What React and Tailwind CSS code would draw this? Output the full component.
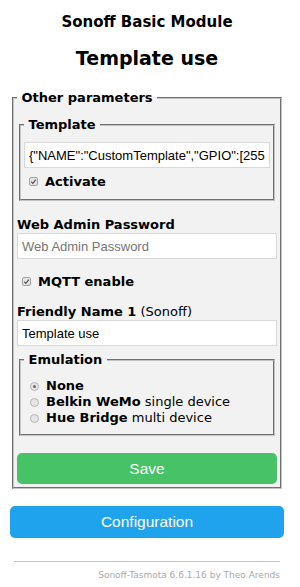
import React from 'react';

const verdana = { fontFamily: '"DejaVu Sans", Verdana, sans-serif' };

const Check = () => (
  <span className="inline-flex h-[9px] w-[9px] shrink-0 items-center justify-center rounded-[2px] border border-[#a3a3a3] bg-[#e4e4e4]">
    <svg viewBox="0 0 10 10" className="h-[7px] w-[7px]">
      <path d="M1.8 5.3 L4.1 7.6 L8.3 2.4" fill="none" stroke="#505050" strokeWidth="1.7" />
    </svg>
  </span>
);

const Radio = ({ on }) => (
  <span className="inline-flex h-[9px] w-[9px] shrink-0 items-center justify-center rounded-full border border-[#b5b5b5] bg-[#e6e6e6]">
    {on && <span className="h-[3px] w-[3px] rounded-full bg-[#6a6a6a]" />}
  </span>
);

const Legend = ({ children }) => (
  <legend className="p-0 text-[13px] leading-[15px] font-bold">&nbsp;{children}&nbsp;</legend>
);

const TextInput = ({ value, placeholder, className = '' }) => (
  <input
    type="text"
    defaultValue={value}
    placeholder={placeholder}
    className={`block h-[26px] w-full border border-[#d9d9d9] bg-white px-[4px] font-['Liberation_Sans',Arial,sans-serif] text-[13px] text-black outline-none placeholder:text-[#757575] ${className}`}
  />
);

const template =
  '{"NAME":"CustomTemplate","GPIO":[255,255,255,255,255,255,0,0,255,255,255,255,255],"FLAG":1,"BASE":18}';

export default function App() {
  return (
    <div className="min-h-[587px] w-[300px] bg-white text-black" style={verdana}>
      <div className="ml-[10px] w-[274px]">
        <h3 className="mt-[13px] text-center text-[15px] leading-[18px] font-bold">Sonoff Basic Module</h3>
        <h2 className="mt-[16px] text-center text-[19px] leading-[22px] font-bold">Template use</h2>

        <fieldset className="mx-[2px] mt-[21px] border-2 border-[#c4c4c4] bg-[#f2f2f2] px-[3px] pt-[3px] pb-[3px] [border-style:groove]">
          <Legend>Other parameters</Legend>

          <fieldset className="mx-[2px] mt-[9px] border-2 border-[#c4c4c4] px-[3px] pt-[3px] pb-[10px] [border-style:groove]">
            <Legend>Template</Legend>
            <TextInput value={template} className="mt-[7px]" />
            <div className="mt-[6px] flex items-center pl-[5px] text-[13px] leading-[15px]">
              <Check />
              <b className="ml-[7px]">Activate</b>
            </div>
          </fieldset>

          <div className="mt-[16px] text-[13px] leading-[15px] font-bold">Web Admin Password</div>
          <TextInput placeholder="Web Admin Password" className="mt-[1px]" />

          <div className="mt-[15px] flex items-center pl-[5px] text-[13px] leading-[15px]">
            <Check />
            <b className="ml-[7px]">MQTT enable</b>
          </div>

          <div className="mt-[15px] text-[13px] leading-[15px]">
            <b>Friendly Name 1</b> (Sonoff)
          </div>
          <TextInput value="Template use" className="mt-[1px]" />

          <fieldset className="mx-[2px] mt-[6px] border-2 border-[#c4c4c4] px-[3px] pt-[3px] pb-[8px] [border-style:groove]">
            <Legend>Emulation</Legend>
            <div className="mt-[8px] text-[13px] leading-[16px]">
              <div className="flex items-center pl-[6px]">
                <Radio on />
                <span className="ml-[7px]"><b>None</b></span>
              </div>
              <div className="flex items-center pl-[6px]">
                <Radio />
                <span className="ml-[7px]"><b>Belkin WeMo</b> single device</span>
              </div>
              <div className="flex items-center pl-[6px]">
                <Radio />
                <span className="ml-[7px]"><b>Hue Bridge</b> multi device</span>
              </div>
            </div>
          </fieldset>

          <button className="mt-[17px] block h-[31px] w-full rounded-[5px] bg-[#47c266] font-['Liberation_Sans',Arial,sans-serif] text-[15.5px] text-white">
            Save
          </button>
        </fieldset>

        <button className="mt-[17px] block h-[32px] w-full rounded-[5px] bg-[#1fa3ec] font-['Liberation_Sans',Arial,sans-serif] text-[15.5px] text-white">
          Configuration
        </button>

        <div className="mt-[23px] px-[4px] text-right">
          <div className="h-px bg-[#c4c4c4]" />
          <div className="mt-[7px] text-[9px] leading-[12px] text-[#aaaaaa]">Sonoff-Tasmota 6.6.1.16 by Theo Arends</div>
        </div>
      </div>
    </div>
  );
}
